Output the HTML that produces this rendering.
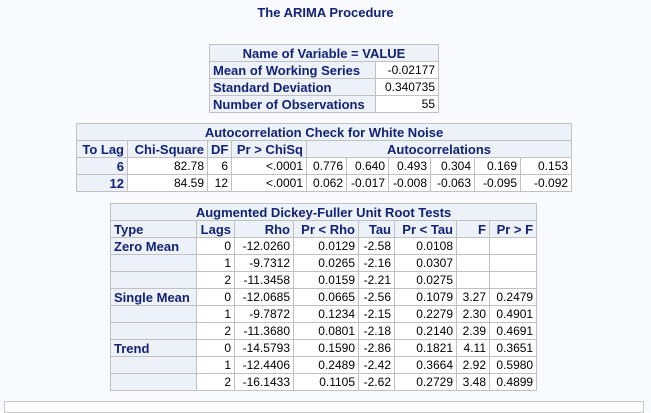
<!DOCTYPE html>
<html><head><style>
body{margin:0;width:651px;height:405px;background:#f9fafe;font-family:"Liberation Sans",Arial,sans-serif;font-size:12px;color:#000;position:relative;overflow:hidden}
.t{position:absolute;left:0;width:651px;text-align:center;top:5px;font-weight:bold;font-size:13px;color:#112277}
table{position:absolute;border-collapse:collapse;table-layout:fixed}
td,th{border:1px solid #c1c1c1;height:16px;padding:0 3px;white-space:nowrap;overflow:hidden;line-height:15px;background:#fff;text-align:right}
th{background:#edf2f9;color:#112277;font-weight:bold;font-size:13px}
th.l{text-align:left}
th.c{text-align:center}
.box{position:absolute;left:4px;top:401px;width:638px;height:10px;border:1px solid #c8c8c8;background:#fff}
</style></head><body>
<div class="t">The ARIMA Procedure</div>
<table style="left:209px;top:44px;width:229px">
<col style="width:166px"><col style="width:63px">
<tr><th colspan="2" class="c">Name of Variable = VALUE</th></tr>
<tr><th class="l">Mean of Working Series</th><td>-0.02177</td></tr>
<tr><th class="l">Standard Deviation</th><td>0.340735</td></tr>
<tr><th class="l">Number of Observations</th><td>55</td></tr>
</table>
<table style="left:76px;top:123px;width:495px">
<col style="width:51px"><col style="width:80px"><col style="width:24px"><col style="width:75px"><col style="width:40px"><col style="width:42px"><col style="width:42px"><col style="width:44px"><col style="width:46px"><col style="width:51px">
<tr><th colspan="10" class="c">Autocorrelation Check for White Noise</th></tr>
<tr><th>To Lag</th><th>Chi-Square</th><th>DF</th><th>Pr &gt; ChiSq</th><th colspan="6" class="c">Autocorrelations</th></tr>
<tr><th>6</th><td>82.78</td><td>6</td><td>&lt;.0001</td><td>0.776</td><td>0.640</td><td>0.493</td><td>0.304</td><td>0.169</td><td>0.153</td></tr>
<tr><th>12</th><td>84.59</td><td>12</td><td>&lt;.0001</td><td>0.062</td><td>-0.017</td><td>-0.008</td><td>-0.063</td><td>-0.095</td><td>-0.092</td></tr>
</table>
<table style="left:110px;top:203px;width:426px">
<col style="width:86px"><col style="width:38px"><col style="width:59px"><col style="width:65px"><col style="width:36px"><col style="width:62px"><col style="width:33px"><col style="width:47px">
<tr><th colspan="8" class="c">Augmented Dickey-Fuller Unit Root Tests</th></tr>
<tr><th class="l">Type</th><th>Lags</th><th>Rho</th><th>Pr &lt; Rho</th><th>Tau</th><th>Pr &lt; Tau</th><th>F</th><th>Pr &gt; F</th></tr>
<tr><th class="l">Zero Mean</th><td>0</td><td>-12.0260</td><td>0.0129</td><td>-2.58</td><td>0.0108</td><td></td><td></td></tr>
<tr><th></th><td>1</td><td>-9.7312</td><td>0.0265</td><td>-2.16</td><td>0.0307</td><td></td><td></td></tr>
<tr><th></th><td>2</td><td>-11.3458</td><td>0.0159</td><td>-2.21</td><td>0.0275</td><td></td><td></td></tr>
<tr><th class="l">Single Mean</th><td>0</td><td>-12.0685</td><td>0.0665</td><td>-2.56</td><td>0.1079</td><td>3.27</td><td>0.2479</td></tr>
<tr><th></th><td>1</td><td>-9.7872</td><td>0.1234</td><td>-2.15</td><td>0.2279</td><td>2.30</td><td>0.4901</td></tr>
<tr><th></th><td>2</td><td>-11.3680</td><td>0.0801</td><td>-2.18</td><td>0.2140</td><td>2.39</td><td>0.4691</td></tr>
<tr><th class="l">Trend</th><td>0</td><td>-14.5793</td><td>0.1590</td><td>-2.86</td><td>0.1821</td><td>4.11</td><td>0.3651</td></tr>
<tr><th></th><td>1</td><td>-12.4406</td><td>0.2489</td><td>-2.42</td><td>0.3664</td><td>2.92</td><td>0.5980</td></tr>
<tr><th></th><td>2</td><td>-16.1433</td><td>0.1105</td><td>-2.62</td><td>0.2729</td><td>3.48</td><td>0.4899</td></tr>
</table>
<div class="box"></div>
</body></html>
